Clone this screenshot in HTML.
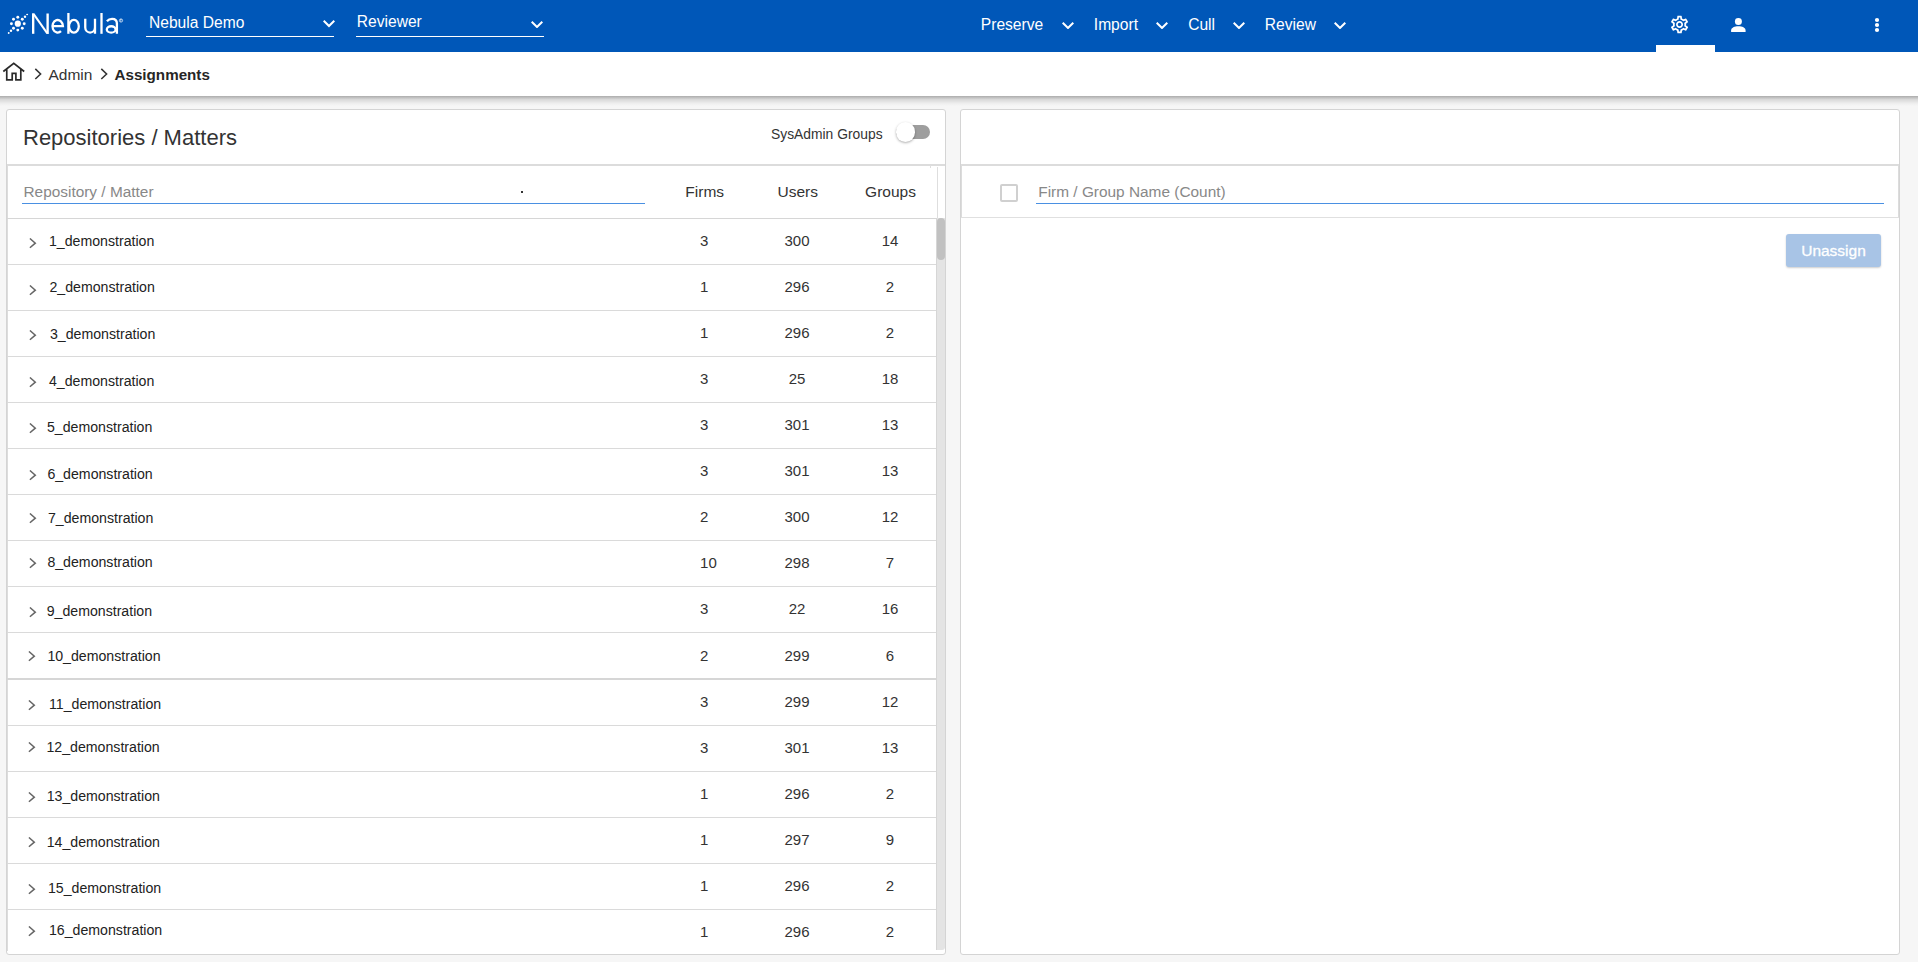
<!DOCTYPE html>
<html><head><meta charset="utf-8">
<style>
*{box-sizing:border-box;margin:0;padding:0}
html,body{width:1918px;height:962px;overflow:hidden}
body{background:#f6f6f6;font-family:"Liberation Sans",sans-serif;position:relative;color:#212121}
.a{position:absolute;white-space:nowrap}
svg{display:block}
#hdr{position:absolute;left:0;top:0;width:1918px;height:52px;background:#0057b8}
.ht{color:#fff;font-size:15.6px;line-height:18px}
.ul{position:absolute;height:1px;background:#fff}
#bc{position:absolute;left:0;top:52px;width:1918px;height:44px;background:#fff}
#sh{position:absolute;left:0;top:96px;width:1918px;height:10px;background:linear-gradient(rgba(0,0,0,0.30),rgba(0,0,0,0.12) 35%,rgba(0,0,0,0.03) 75%,rgba(0,0,0,0))}
.panel{position:absolute;background:#fff;border:1px solid #d4d4d4;border-radius:3px}
.hl{position:absolute;height:2px;background:#dcdcdc}
.rl{position:absolute;height:1px;background:#dadada}
.lbl{font-size:14.15px;line-height:16px;color:#222}
.num{font-size:15px;line-height:16px;color:#333}
</style></head><body>

<div id="hdr"></div>
<svg class="a" style="left:0;top:0" width="130" height="52"><g fill="#fff"><circle cx="17.8" cy="23.7" r="3.1"/><circle cx="17.8" cy="17.3" r="1.45"/><circle cx="17.8" cy="30.1" r="1.45"/><circle cx="11.4" cy="23.7" r="1.45"/><circle cx="24.2" cy="23.7" r="1.45"/><circle cx="13.5" cy="19.3" r="1.45"/><circle cx="22.3" cy="19.3" r="1.45"/><circle cx="13.5" cy="28.3" r="1.45"/><circle cx="22.3" cy="28.3" r="1.45"/><circle cx="25" cy="16.7" r="1.2"/><ellipse cx="27.1" cy="14.5" rx="1.0" ry="0.65"/><circle cx="11" cy="30.8" r="1.2"/><circle cx="8.7" cy="33" r="0.95"/><path d="M32 13.5H34.5L48.8 33.8H46.3Z"/><rect x="32" y="13.5" width="2.35" height="20.3"/><rect x="46.45" y="13.5" width="2.35" height="20.3"/></g><g fill="none" stroke="#fff" stroke-width="2.3"><path d="M52.45 26.15H62.95A5.25 6.3 0 1 0 61.0 31.2"/><path d="M68.4 13V33.8"/><ellipse cx="73.9" cy="26.25" rx="4.9" ry="6.3"/><path d="M85.25 18.7V27.5A4.85 5.05 0 0 0 94.95 27.5M95 18.7V33.8"/><path d="M101.5 13V33.8"/><path d="M106.9 21.2C108.4 19.5 110.2 18.95 112.1 18.95C115.2 18.95 116.9 20.7 116.9 23.6V33.8"/><ellipse cx="111.2" cy="29.4" rx="4.4" ry="3.15"/></g><circle cx="121" cy="20.5" r="1.6" fill="none" stroke="#fff" stroke-width="0.7"/><path d="M120.4 21.6V19.5H121.3L121.7 20.5" fill="none" stroke="#fff" stroke-width="0.5"/></svg>
<div class="a ht" style="left:149px;top:13.8px;font-size:15.6px">Nebula Demo</div>
<div class="ul" style="left:146px;top:36px;width:188px"></div>
<div class="a" style="left:323.2px;top:20.3px"><svg width="12" height="7.41" viewBox="6 8.59 12 7.41"><path d="M16.59 8.59 12 13.17 7.41 8.59 6 10l6 6 6-6z" fill="#fff"/></svg></div>
<div class="a ht" style="left:356.8px;top:12.8px;font-size:15.6px">Reviewer</div>
<div class="ul" style="left:356px;top:36px;width:188px"></div>
<div class="a" style="left:531.2px;top:20.5px"><svg width="12" height="7.41" viewBox="6 8.59 12 7.41"><path d="M16.59 8.59 12 13.17 7.41 8.59 6 10l6 6 6-6z" fill="#fff"/></svg></div>
<div class="a ht" style="left:980.8px;top:15.8px">Preserve</div>
<div class="a" style="left:1061.7px;top:21.7px"><svg width="12" height="7.41" viewBox="6 8.59 12 7.41"><path d="M16.59 8.59 12 13.17 7.41 8.59 6 10l6 6 6-6z" fill="#fff"/></svg></div>
<div class="a ht" style="left:1093.8px;top:15.8px">Import</div>
<div class="a" style="left:1155.7px;top:21.7px"><svg width="12" height="7.41" viewBox="6 8.59 12 7.41"><path d="M16.59 8.59 12 13.17 7.41 8.59 6 10l6 6 6-6z" fill="#fff"/></svg></div>
<div class="a ht" style="left:1188.2px;top:15.8px">Cull</div>
<div class="a" style="left:1232.7px;top:21.7px"><svg width="12" height="7.41" viewBox="6 8.59 12 7.41"><path d="M16.59 8.59 12 13.17 7.41 8.59 6 10l6 6 6-6z" fill="#fff"/></svg></div>
<div class="a ht" style="left:1264.8px;top:15.8px">Review</div>
<div class="a" style="left:1333.7px;top:21.7px"><svg width="12" height="7.41" viewBox="6 8.59 12 7.41"><path d="M16.59 8.59 12 13.17 7.41 8.59 6 10l6 6 6-6z" fill="#fff"/></svg></div>
<div class="a" style="left:1656px;top:45px;width:59px;height:7px;background:#fff"></div>
<svg class="a" style="left:1668.9px;top:14.3px" width="21.1" height="21.1" viewBox="0 0 24 24"><path fill="#fff" d="M19.43 12.98c.04-.32.07-.64.07-.98 0-.34-.03-.66-.07-.98l2.11-1.65c.19-.15.24-.42.12-.64l-2-3.46a.5.5 0 0 0-.61-.22l-2.49 1c-.52-.4-1.08-.73-1.69-.98l-.38-2.65A.488.488 0 0 0 14 2h-4c-.25 0-.46.18-.49.42l-.38 2.65c-.61.25-1.170.59-1.69.98l-2.49-1a.566.566 0 0 0-.18-.03c-.17 0-.34.09-.43.25l-2 3.46c-.13.22-.07.49.12.64l2.11 1.65c-.04.32-.07.65-.07.98 0 .33.03.66.07.98l-2.11 1.65c-.19.15-.24.42-.12.64l2 3.46a.5.5 0 0 0 .61.22l2.49-1c.52.4 1.08.73 1.69.98l.38 2.65c.03.24.24.42.49.42h4c.25 0 .46-.18.49-.42l.38-2.65c.61-.25 1.17-.59 1.69-.98l2.49 1c.06.02.12.03.18.03.17 0 .34-.09.43-.25l2-3.46c.12-.22.07-.49-.12-.64l-2.11-1.65zm-1.98-1.71c.04.31.05.52.05.73 0 .21-.02.43-.05.73l-.14 1.130.89.7 1.08.84-.7 1.21-1.27-.51-1.04-.42-.9.68c-.43.32-.84.56-1.25.73l-1.06.43-.16 1.13-.2 1.35h-1.4l-.19-1.35-.16-1.13-1.06-.43c-.43-.18-.83-.41-1.23-.71l-.91-.7-1.06.43-1.27.51-.7-1.21 1.08-.84.89-.7-.14-1.13c-.03-.31-.05-.54-.05-.74s.02-.43.05-.73l.14-1.13-.89-.7-1.08-.84.7-1.21 1.27.51 1.04.42.9-.68c.43-.32.84-.56 1.25-.73l1.06-.43.16-1.13.2-1.35h1.39l.19 1.35.16 1.13 1.06.43c.43.18.83.41 1.23.71l.91.7 1.06-.43 1.27-.51.7 1.21-1.07.85-.89.7.14 1.13zM12 8c-2.21 0-4 1.79-4 4s1.790 4 4 4 4-1.79 4-4-1.79-4-4-4zm0 6c-1.1 0-2-.9-2-2s.9-2 2-2 2 .9 2 2-.9 2-2 2z"/></svg>
<svg class="a" style="left:1731px;top:17.8px" width="15" height="14.2" viewBox="0 0 15 14.2"><circle cx="7.4" cy="3.6" r="3.5" fill="#fff"/><path d="M0.1 14.2 V12.4 C0.1 9.6 3.6 8.2 7.4 8.2 C11.2 8.2 14.6 9.6 14.6 12.4 V14.2 Z" fill="#fff"/></svg>
<svg class="a" style="left:1872px;top:15px" width="10" height="20"><circle cx="5" cy="5" r="2.1" fill="#fff"/><circle cx="5" cy="10" r="2.1" fill="#fff"/><circle cx="5" cy="15" r="2.1" fill="#fff"/></svg>
<div id="bc"></div><div id="sh"></div>
<svg class="a" style="left:0;top:58px" width="30" height="30"><path d="M3.3 13.5 L13.76 5.4 L24.2 13.5 M6.75 11.2 V21.95 H12.2 V15.3 H15.9 V21.95 H20.8 V11.2" fill="none" stroke="#2a2a2a" stroke-width="1.7"/></svg>
<div class="a" style="left:34px;top:67px"><svg width="10" height="14" viewBox="0 0 10 14"><path d="M1.3 1.9 L6.6 6.95 L1.3 12" fill="none" stroke="#333" stroke-width="1.55"/></svg></div>
<div class="a" style="left:48.5px;top:65.5px;font-size:15.5px;line-height:18px;color:#333">Admin</div>
<div class="a" style="left:100px;top:67px"><svg width="10" height="14" viewBox="0 0 10 14"><path d="M1.3 1.9 L6.6 6.95 L1.3 12" fill="none" stroke="#333" stroke-width="1.55"/></svg></div>
<div class="a" style="left:114.5px;top:65.5px;font-size:15.2px;line-height:18px;font-weight:bold;color:#262626">Assignments</div>
<div class="panel" style="left:6px;top:109px;width:940px;height:846px"></div>
<div class="a" style="left:23px;top:125px;font-size:22px;line-height:25px;color:#333">Repositories / Matters</div>
<div class="a" style="left:771px;top:125.7px;font-size:13.85px;line-height:16px;color:#333">SysAdmin Groups</div>
<div class="a" style="left:896px;top:125px;width:34px;height:14px;border-radius:7px;background:#9e9e9e"></div>
<div class="a" style="left:895.5px;top:122px;width:19.5px;height:19.5px;border-radius:50%;background:#fff;box-shadow:0 1px 2.5px rgba(0,0,0,0.32)"></div>
<div class="hl" style="left:7px;top:164px;width:938px"></div>
<div class="a" style="left:7px;top:166px;width:1px;height:785px;background:#dcdcdc"></div>
<div class="a" style="left:23.5px;top:182.6px;font-size:15.4px;line-height:18px;color:#888">Repository / Matter</div>
<div class="a" style="left:22px;top:203px;width:623px;height:1px;background:#4a90e2"></div>
<div class="a" style="left:521px;top:191px;width:2px;height:2px;background:#333"></div>
<div class="a" style="left:654.7px;top:182.6px;width:100px;text-align:center;font-size:15.5px;line-height:18px;color:#333">Firms</div>
<div class="a" style="left:747.7px;top:182.6px;width:100px;text-align:center;font-size:15.5px;line-height:18px;color:#333">Users</div>
<div class="a" style="left:840.5px;top:182.6px;width:100px;text-align:center;font-size:15.5px;line-height:18px;color:#333">Groups</div>
<div class="rl" style="left:7px;top:218px;width:930px;background:#d6d6d6"></div>
<div class="a lbl" style="left:49.0px;top:233.2px">1_demonstration</div>
<div class="a" style="left:28.6px;top:238.0px"><svg width="8" height="11" viewBox="0 0 8 11"><path d="M0.9 0.5 L6.3 5.15 L0.9 9.8" fill="none" stroke="#666" stroke-width="1.5"/></svg></div>
<div class="a num" style="left:700.1px;top:233.0px">3</div>
<div class="a num" style="left:747px;top:233.0px;width:100px;text-align:center">300</div>
<div class="a num" style="left:840px;top:233.0px;width:100px;text-align:center">14</div>
<div class="rl" style="left:7px;top:264px;width:929px"></div>
<div class="a lbl" style="left:49.5px;top:279.0px">2_demonstration</div>
<div class="a" style="left:28.6px;top:284.5px"><svg width="8" height="11" viewBox="0 0 8 11"><path d="M0.9 0.5 L6.3 5.15 L0.9 9.8" fill="none" stroke="#666" stroke-width="1.5"/></svg></div>
<div class="a num" style="left:700.1px;top:279.0px">1</div>
<div class="a num" style="left:747px;top:279.0px;width:100px;text-align:center">296</div>
<div class="a num" style="left:840px;top:279.0px;width:100px;text-align:center">2</div>
<div class="rl" style="left:7px;top:310px;width:929px"></div>
<div class="a lbl" style="left:50.0px;top:325.9px">3_demonstration</div>
<div class="a" style="left:28.6px;top:330.0px"><svg width="8" height="11" viewBox="0 0 8 11"><path d="M0.9 0.5 L6.3 5.15 L0.9 9.8" fill="none" stroke="#666" stroke-width="1.5"/></svg></div>
<div class="a num" style="left:700.1px;top:325.0px">1</div>
<div class="a num" style="left:747px;top:325.0px;width:100px;text-align:center">296</div>
<div class="a num" style="left:840px;top:325.0px;width:100px;text-align:center">2</div>
<div class="rl" style="left:7px;top:356px;width:929px"></div>
<div class="a lbl" style="left:49.0px;top:373.2px">4_demonstration</div>
<div class="a" style="left:28.6px;top:376.6px"><svg width="8" height="11" viewBox="0 0 8 11"><path d="M0.9 0.5 L6.3 5.15 L0.9 9.8" fill="none" stroke="#666" stroke-width="1.5"/></svg></div>
<div class="a num" style="left:700.1px;top:371.0px">3</div>
<div class="a num" style="left:747px;top:371.0px;width:100px;text-align:center">25</div>
<div class="a num" style="left:840px;top:371.0px;width:100px;text-align:center">18</div>
<div class="rl" style="left:7px;top:402px;width:929px"></div>
<div class="a lbl" style="left:47.0px;top:419.4px">5_demonstration</div>
<div class="a" style="left:28.6px;top:422.8px"><svg width="8" height="11" viewBox="0 0 8 11"><path d="M0.9 0.5 L6.3 5.15 L0.9 9.8" fill="none" stroke="#666" stroke-width="1.5"/></svg></div>
<div class="a num" style="left:700.1px;top:417.0px">3</div>
<div class="a num" style="left:747px;top:417.0px;width:100px;text-align:center">301</div>
<div class="a num" style="left:840px;top:417.0px;width:100px;text-align:center">13</div>
<div class="rl" style="left:7px;top:448px;width:929px"></div>
<div class="a lbl" style="left:47.4px;top:466.2px">6_demonstration</div>
<div class="a" style="left:28.6px;top:469.6px"><svg width="8" height="11" viewBox="0 0 8 11"><path d="M0.9 0.5 L6.3 5.15 L0.9 9.8" fill="none" stroke="#666" stroke-width="1.5"/></svg></div>
<div class="a num" style="left:700.1px;top:463.0px">3</div>
<div class="a num" style="left:747px;top:463.0px;width:100px;text-align:center">301</div>
<div class="a num" style="left:840px;top:463.0px;width:100px;text-align:center">13</div>
<div class="rl" style="left:7px;top:494px;width:929px"></div>
<div class="a lbl" style="left:48.0px;top:510.2px">7_demonstration</div>
<div class="a" style="left:28.6px;top:513.2px"><svg width="8" height="11" viewBox="0 0 8 11"><path d="M0.9 0.5 L6.3 5.15 L0.9 9.8" fill="none" stroke="#666" stroke-width="1.5"/></svg></div>
<div class="a num" style="left:700.1px;top:509.0px">2</div>
<div class="a num" style="left:747px;top:509.0px;width:100px;text-align:center">300</div>
<div class="a num" style="left:840px;top:509.0px;width:100px;text-align:center">12</div>
<div class="rl" style="left:7px;top:540px;width:929px"></div>
<div class="a lbl" style="left:47.4px;top:553.6px">8_demonstration</div>
<div class="a" style="left:28.6px;top:557.5px"><svg width="8" height="11" viewBox="0 0 8 11"><path d="M0.9 0.5 L6.3 5.15 L0.9 9.8" fill="none" stroke="#666" stroke-width="1.5"/></svg></div>
<div class="a num" style="left:700.1px;top:555.0px">10</div>
<div class="a num" style="left:747px;top:555.0px;width:100px;text-align:center">298</div>
<div class="a num" style="left:840px;top:555.0px;width:100px;text-align:center">7</div>
<div class="rl" style="left:7px;top:586px;width:929px"></div>
<div class="a lbl" style="left:46.7px;top:603.1px">9_demonstration</div>
<div class="a" style="left:28.6px;top:606.5px"><svg width="8" height="11" viewBox="0 0 8 11"><path d="M0.9 0.5 L6.3 5.15 L0.9 9.8" fill="none" stroke="#666" stroke-width="1.5"/></svg></div>
<div class="a num" style="left:700.1px;top:601.0px">3</div>
<div class="a num" style="left:747px;top:601.0px;width:100px;text-align:center">22</div>
<div class="a num" style="left:840px;top:601.0px;width:100px;text-align:center">16</div>
<div class="rl" style="left:7px;top:632px;width:929px"></div>
<div class="a lbl" style="left:47.4px;top:647.5px">10_demonstration</div>
<div class="a" style="left:28.1px;top:650.5px"><svg width="8" height="11" viewBox="0 0 8 11"><path d="M0.9 0.5 L6.3 5.15 L0.9 9.8" fill="none" stroke="#666" stroke-width="1.5"/></svg></div>
<div class="a num" style="left:700.1px;top:647.9px">2</div>
<div class="a num" style="left:747px;top:647.9px;width:100px;text-align:center">299</div>
<div class="a num" style="left:840px;top:647.9px;width:100px;text-align:center">6</div>
<div class="rl" style="left:7px;top:678px;width:929px;height:2px;background:#d6d6d6"></div>
<div class="a lbl" style="left:49.0px;top:696.1px">11_demonstration</div>
<div class="a" style="left:28.1px;top:699.5px"><svg width="8" height="11" viewBox="0 0 8 11"><path d="M0.9 0.5 L6.3 5.15 L0.9 9.8" fill="none" stroke="#666" stroke-width="1.5"/></svg></div>
<div class="a num" style="left:700.1px;top:693.9px">3</div>
<div class="a num" style="left:747px;top:693.9px;width:100px;text-align:center">299</div>
<div class="a num" style="left:840px;top:693.9px;width:100px;text-align:center">12</div>
<div class="rl" style="left:7px;top:725px;width:929px"></div>
<div class="a lbl" style="left:46.5px;top:738.8px">12_demonstration</div>
<div class="a" style="left:28.1px;top:742.2px"><svg width="8" height="11" viewBox="0 0 8 11"><path d="M0.9 0.5 L6.3 5.15 L0.9 9.8" fill="none" stroke="#666" stroke-width="1.5"/></svg></div>
<div class="a num" style="left:700.1px;top:739.9px">3</div>
<div class="a num" style="left:747px;top:739.9px;width:100px;text-align:center">301</div>
<div class="a num" style="left:840px;top:739.9px;width:100px;text-align:center">13</div>
<div class="rl" style="left:7px;top:771px;width:929px"></div>
<div class="a lbl" style="left:46.7px;top:788.2px">13_demonstration</div>
<div class="a" style="left:28.1px;top:791.8px"><svg width="8" height="11" viewBox="0 0 8 11"><path d="M0.9 0.5 L6.3 5.15 L0.9 9.8" fill="none" stroke="#666" stroke-width="1.5"/></svg></div>
<div class="a num" style="left:700.1px;top:785.9px">1</div>
<div class="a num" style="left:747px;top:785.9px;width:100px;text-align:center">296</div>
<div class="a num" style="left:840px;top:785.9px;width:100px;text-align:center">2</div>
<div class="rl" style="left:7px;top:817px;width:929px"></div>
<div class="a lbl" style="left:46.7px;top:833.7px">14_demonstration</div>
<div class="a" style="left:28.1px;top:837.0px"><svg width="8" height="11" viewBox="0 0 8 11"><path d="M0.9 0.5 L6.3 5.15 L0.9 9.8" fill="none" stroke="#666" stroke-width="1.5"/></svg></div>
<div class="a num" style="left:700.1px;top:831.9px">1</div>
<div class="a num" style="left:747px;top:831.9px;width:100px;text-align:center">297</div>
<div class="a num" style="left:840px;top:831.9px;width:100px;text-align:center">9</div>
<div class="rl" style="left:7px;top:863px;width:929px"></div>
<div class="a lbl" style="left:48.0px;top:879.9px">15_demonstration</div>
<div class="a" style="left:28.1px;top:883.5px"><svg width="8" height="11" viewBox="0 0 8 11"><path d="M0.9 0.5 L6.3 5.15 L0.9 9.8" fill="none" stroke="#666" stroke-width="1.5"/></svg></div>
<div class="a num" style="left:700.1px;top:877.9px">1</div>
<div class="a num" style="left:747px;top:877.9px;width:100px;text-align:center">296</div>
<div class="a num" style="left:840px;top:877.9px;width:100px;text-align:center">2</div>
<div class="rl" style="left:7px;top:909px;width:929px"></div>
<div class="a lbl" style="left:49.0px;top:922.0px">16_demonstration</div>
<div class="a" style="left:28.1px;top:925.9px"><svg width="8" height="11" viewBox="0 0 8 11"><path d="M0.9 0.5 L6.3 5.15 L0.9 9.8" fill="none" stroke="#666" stroke-width="1.5"/></svg></div>
<div class="a num" style="left:700.1px;top:923.9px">1</div>
<div class="a num" style="left:747px;top:923.9px;width:100px;text-align:center">296</div>
<div class="a num" style="left:840px;top:923.9px;width:100px;text-align:center">2</div>
<div class="a" style="left:936px;top:218px;width:9px;height:732px;background:#e4e4e4;border-left:1px solid #d6d6d6;border-bottom-right-radius:3px"></div>
<div class="a" style="left:937px;top:167px;width:1px;height:51px;background:#dedede"></div>
<div class="a" style="left:930px;top:165px;width:1px;height:3px;background:#dedede"></div>
<div class="a" style="left:937px;top:218px;width:8px;height:42px;border-radius:4px;background:#c1c1c1"></div>
<div class="panel" style="left:960px;top:109px;width:940px;height:846px"></div>
<div class="hl" style="left:961px;top:164px;width:938px"></div>
<div class="a" style="left:1000px;top:184px;width:18px;height:18px;border:2px solid #d0d0d0;border-radius:2px;background:#fff"></div>
<div class="a" style="left:1038.3px;top:183.2px;font-size:15.4px;line-height:18px;color:#888">Firm / Group Name (Count)</div>
<div class="a" style="left:1036px;top:203px;width:848px;height:1px;background:#4a90e2"></div>
<div class="rl" style="left:961px;top:217px;width:938px;background:#e0e0e0"></div>
<div class="a" style="left:961px;top:166px;width:1px;height:51px;background:#dcdcdc"></div>
<div class="a" style="left:1898px;top:166px;width:1px;height:51px;background:#dcdcdc"></div>
<div class="a" style="left:1786px;top:234px;width:95px;height:33px;border-radius:3px;background:#a8c4e6;box-shadow:0 1px 2px rgba(0,0,0,0.2);color:#fff;font-size:15.5px;line-height:33px;text-align:center;-webkit-text-stroke:0.3px #fff">Unassign</div>
</body></html>
